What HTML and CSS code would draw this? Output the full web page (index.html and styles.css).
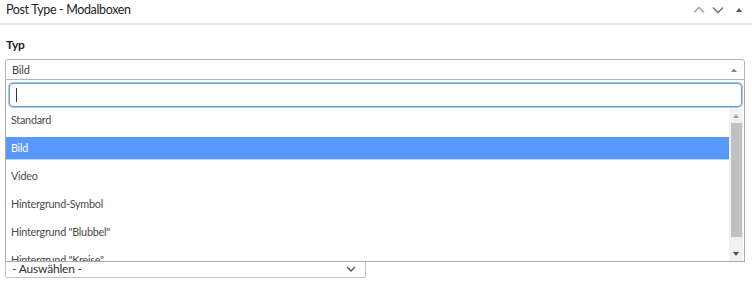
FILE: index.html
```html
<!DOCTYPE html>
<html lang="de">
<head>
<meta charset="utf-8">
<title>Post Type - Modalboxen</title>
<link rel="stylesheet" href="styles.css">
</head>
<body>
<div class="box">
  <div class="box-header">
    <h2 class="box-title">Post Type - Modalboxen</h2>
    <div class="box-actions">
      <svg class="hicon" width="14" height="10" viewBox="0 0 14 10"><path d="M2 7.5 L7 2.5 L12 7.5" fill="none" stroke="#a7aaad" stroke-width="1.6"/></svg>
      <svg class="hicon dark" width="14" height="10" viewBox="0 0 14 10"><path d="M2 2.5 L7 7.5 L12 2.5" fill="none" stroke="#787c82" stroke-width="1.6"/></svg>
      <svg class="hicon tri" width="10" height="10" viewBox="0 0 10 10"><path d="M2 7 L5 3 L8 7 Z" fill="#50575e"/></svg>
    </div>
  </div>
  <div class="box-body">
    <div class="field">
      <label class="field-label">Typ</label>
      <div class="select open">
        <span class="select-value">Bild</span>
        <svg class="select-arrow" width="8" height="6" viewBox="0 0 8 6"><path d="M1 5 L4 1.5 L7 5 Z" fill="#888"/></svg>
      </div>
    </div>
    <div class="field second">
      <div class="select2">
        <span class="select2-value">- Auswählen -</span>
        <svg class="chev" width="12" height="8" viewBox="0 0 12 8"><path d="M2 2 L6 6 L10 2" fill="none" stroke="#50575e" stroke-width="1.5"/></svg>
      </div>
    </div>
  </div>
  <div class="dropdown">
    <div class="search"><input class="search-input" type="text" value=""><span class="caret"></span></div>
    <div class="results">
      <ul class="options">
        <li class="option">Standard</li>
        <li class="option active">Bild</li>
        <li class="option">Video</li>
        <li class="option">Hintergrund-Symbol</li>
        <li class="option">Hintergrund "Blubbel"</li>
        <li class="option">Hintergrund "Kreise"</li>
      </ul>
      <div class="scrollbar">
        <div class="sb-btn"><svg width="8" height="6" viewBox="0 0 8 6"><path d="M1 5 L4 1 L7 5 Z" fill="#a3a3a3"/></svg></div>
        <div class="sb-track"><div class="sb-thumb"></div></div>
        <div class="sb-btn"><svg width="8" height="6" viewBox="0 0 8 6"><path d="M1 1 L4 5 L7 1 Z" fill="#505050"/></svg></div>
      </div>
    </div>
  </div>
</div>
</body>
</html>
```
FILE: styles.css
```css
* { box-sizing: border-box; }
html, body { margin: 0; padding: 0; background: #fff; }
body {
  font-family: "Lato", "Open Sans", sans-serif;
  color: #1d2327;
  width: 752px;
  height: 285px;
  overflow: hidden;
}
.box { position: relative; height: 285px; }
.box-header {
  height: 25px;
  border-bottom: 2px solid #e6e6e6;
  display: flex;
  align-items: center;
  justify-content: space-between;
  padding: 0 6px;
}
.box-title {
  margin: 0;
  font-size: 12.5px;
  letter-spacing: -0.35px;
  font-weight: 400;
  color: #1d2327;
  line-height: 1;
  padding-bottom: 3px;
}
.box-actions {
  display: flex;
  align-items: center;
  gap: 5px;
  padding-bottom: 3px;
  padding-right: 2px;
}
.hicon.tri { margin-left: 4px; }
.box-body { padding: 13px 5px 0 5px; }
.field-label {
  display: block;
  font-size: 12px;
  font-weight: 700;
  letter-spacing: -0.2px;
  color: #1d2327;
  padding-left: 1px;
  height: 21px;
  line-height: 14px;
}
.select {
  width: 740px;
  height: 21px;
  border: 1px solid #b4b4b4;
  border-radius: 3px 3px 0 0;
  display: flex;
  align-items: center;
  justify-content: space-between;
  padding: 0 6px 0 6px;
  font-size: 11px;
  letter-spacing: -0.2px;
  color: #444;
}
.select-arrow { margin-top: 1px; }
.field.second { margin-top: 179px; }
.select2 {
  width: 361px;
  height: 19px;
  border: 1px solid #c3c4c7;
  border-top-color: transparent;
  border-radius: 0 0 2px 2px;
  display: flex;
  align-items: center;
  justify-content: space-between;
  padding: 0 8px 0 6px;
  font-size: 12px;
  letter-spacing: -0.2px;
  color: #2c3338;
}
.dropdown {
  position: absolute;
  left: 5px;
  top: 80px;
  width: 740px;
  height: 182px;
  background: #fff;
  border: 1px solid #aaa;
  border-top: none;
  display: flex;
  flex-direction: column;
}
.search { padding: 3px 2px 2px 3px; position: relative; }
.search-input {
  display: block;
  width: 100%;
  height: 24px;
  border: 1px solid #6a9fd0;
  border-radius: 4px;
  box-shadow: 0 0 0 1px #a9c8e6;
  outline: none;
  padding: 0 6px;
  font: inherit;
}
.caret {
  position: absolute;
  left: 10px;
  top: 8px;
  width: 1px;
  height: 14px;
  background: #333;
}
.results {
  flex: 1;
  display: flex;
  min-height: 0;
}
.options {
  flex: 1;
  list-style: none;
  margin: 0;
  padding: 0;
  overflow: hidden;
  font-size: 10.8px;
  letter-spacing: -0.25px;
  color: #4a4a4a;
}
.option {
  height: 22px;
  line-height: 22px;
  margin-bottom: 6px;
  padding-left: 5px;
}
.option.active {
  background: #5897fb;
  color: #fff;
  box-shadow: 0 1px 0 #b9d3fb;
}
.scrollbar {
  width: 14px;
  margin-right: 1px;
  display: flex;
  flex-direction: column;
  background: #f1f1f1;
}
.sb-btn {
  height: 14px;
  display: flex;
  align-items: center;
  justify-content: center;
}
.sb-track {
  flex: 1;
  padding: 0 1px 0 2px;
}
.sb-thumb {
  height: 114px;
  background: #c1c1c1;
}
```
